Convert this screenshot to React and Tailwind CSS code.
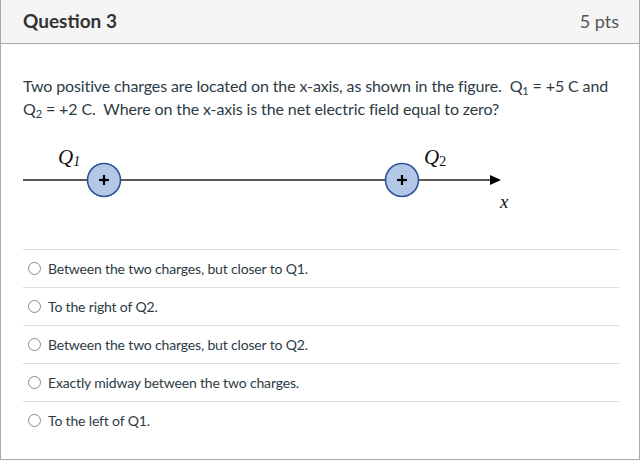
import React from 'react';

const options = [
  'Between the two charges, but closer to Q1.',
  'To the right of Q2.',
  'Between the two charges, but closer to Q2.',
  'Exactly midway between the two charges.',
  'To the left of Q1.',
];

const Charge = ({ cx }) => (
  <g>
    <circle cx={cx} cy="40" r="16.5" fill="#b4c7e7" stroke="#2f5597" strokeWidth="1.6" />
    <line x1={cx - 5} y1="40" x2={cx + 5} y2="40" stroke="#000" strokeWidth="2.2" />
    <line x1={cx} y1="35" x2={cx} y2="45" stroke="#000" strokeWidth="2.2" />
  </g>
);

const Figure = () => (
  <svg width="600" height="80" viewBox="0 0 600 80" className="block">
    <line x1="0" y1="40" x2="468" y2="40" stroke="#222" strokeWidth="1.3" />
    <polygon points="467,35 478,40 467,45" fill="#000" />
    <Charge cx={81} />
    <Charge cx={379} />
    <text x="35" y="24" fontFamily="'Liberation Serif', serif" fontStyle="italic" fontSize="21" fill="#111">
      Q<tspan fontSize="14" dy="2">1</tspan>
    </text>
    <text x="401" y="24" fontFamily="'Liberation Serif', serif" fontStyle="italic" fontSize="21" fill="#111">
      Q<tspan fontSize="14" dy="2" fontStyle="normal">2</tspan>
    </text>
    <text x="477" y="68" fontFamily="'Liberation Serif', serif" fontStyle="italic" fontSize="19" fill="#111">
      x
    </text>
  </svg>
);

const App = () => {
  return (
    <div className="w-[641px] h-[464px] bg-white font-['Lato',sans-serif] text-[#2d3b45]">
      <div className="w-[640px] h-[460px] border-x border-b border-[#a9a9a9] flex flex-col">
        <div className="h-[44px] bg-[#f5f5f5] border-b border-[#a9a9a9] flex items-center justify-between pl-[22px] pr-[20px]">
          <h2 className="text-[19px] font-bold text-[#333]">Question 3</h2>
          <span className="text-[18px] text-[#555]">5 pts</span>
        </div>

        <div className="pl-[22px] pr-[20px] pt-[30px]">
          <p className="text-[16px] leading-[23px] tracking-[-0.12px]">
            Two positive charges are located on the x-axis, as shown in the figure.{'\u00a0 '}
            Q<sub className="text-[11px]">1</sub> = +5 C and Q<sub className="text-[11px]">2</sub> = +2 C.{'\u00a0 '}
            Where on the x-axis is the net electric field equal to zero?
          </p>
          <div className="mt-[20px]">
            <Figure />
          </div>

          <div className="mt-[29px]">
            {options.map((opt) => (
              <label
                key={opt}
                className="h-[38px] border-t border-[#dcdcdc] flex items-center gap-[7px] pl-[5px] text-[14px] tracking-[-0.16px]"
              >
                <span className="w-[13px] h-[13px] rounded-full border border-[#8a8a8a] bg-white" />
                <span>{opt}</span>
              </label>
            ))}
          </div>
        </div>
      </div>
    </div>
  );
};

export default App;
